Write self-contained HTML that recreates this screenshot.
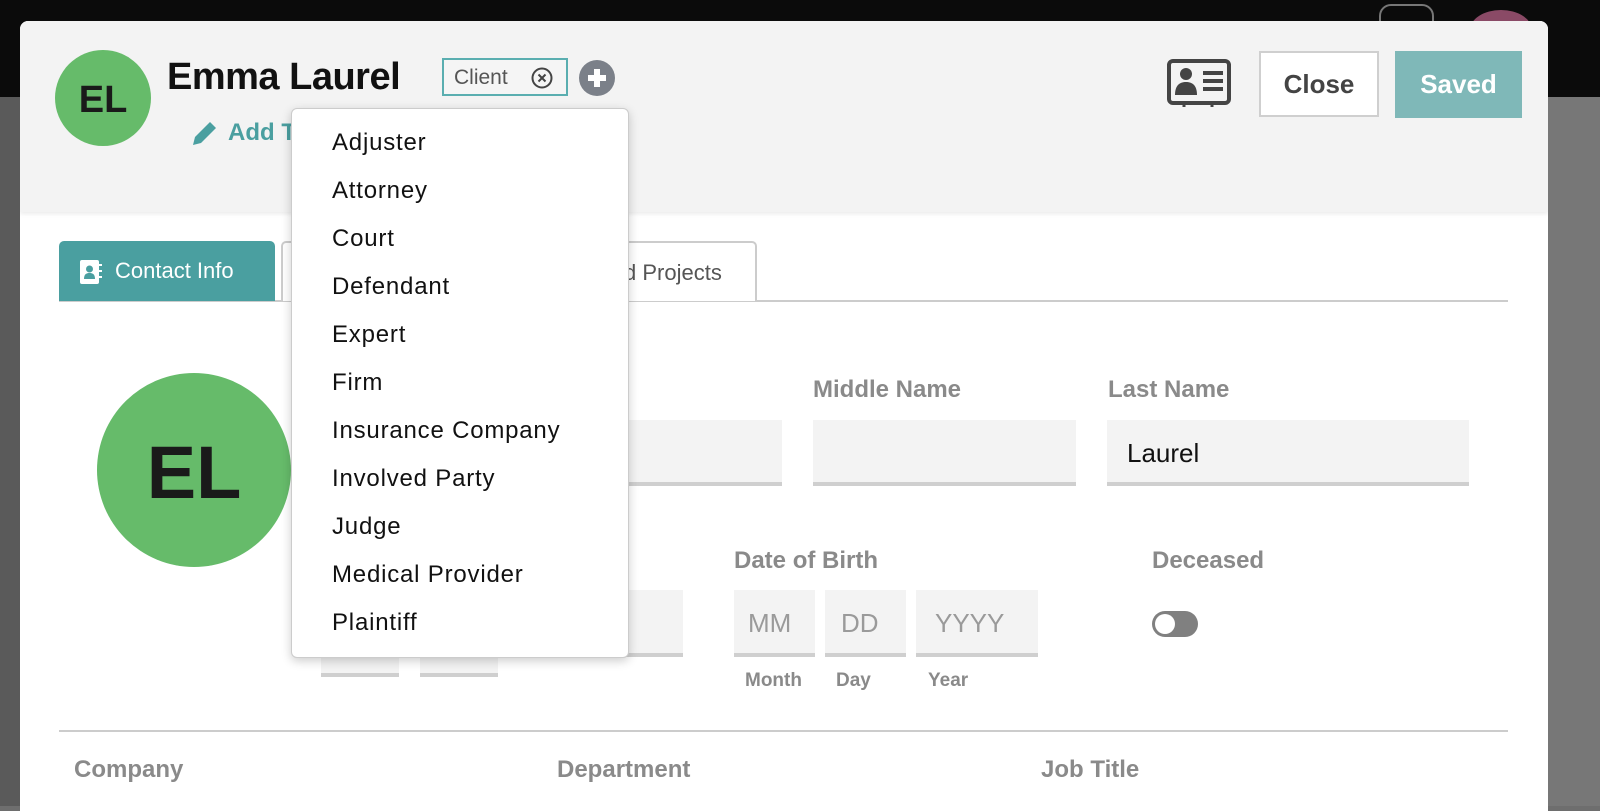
<!DOCTYPE html>
<html><head><meta charset="utf-8"><style>
*{box-sizing:border-box;margin:0;padding:0}
body{width:1600px;height:806px;overflow:hidden;position:relative;background:#6e6e6e;font-family:"Liberation Sans",Arial,sans-serif}
.a{position:absolute}
.lbl{position:absolute;font-weight:bold;font-size:24px;color:#8a8a8a}
.inp{position:absolute;background:#f3f3f3;border-bottom:4px solid #cfcfcf}
.sub{position:absolute;font-weight:bold;font-size:19px;color:#8a8a8a}
.ph{position:absolute;font-size:26px;color:#9a9a9a}
.dd div{position:absolute;left:40px;font-size:24px;color:#111;letter-spacing:0.8px}
</style></head><body>
<div class="a" style="left:0;top:0;width:1600px;height:97px;background:#0b0b0b"></div>
<div class="a" style="left:0;top:97px;width:20px;height:709px;background:#5a5a5a"></div>
<div class="a" style="left:1548px;top:97px;width:52px;height:709px;background:#777"></div>
<div class="a" style="left:1379px;top:4px;width:55px;height:30px;border:2px solid #777;border-radius:12px"></div>
<div class="a" style="left:1470px;top:10px;width:62px;height:40px;border-radius:50%;background:#8a4a66"></div>

<div class="a" style="left:20px;top:21px;width:1528px;height:790px;background:#fff;border-radius:8px 8px 0 0;overflow:hidden">
 <div class="a" style="left:0;top:0;width:1528px;height:191px;background:#f3f3f3;box-shadow:0 2px 4px rgba(0,0,0,0.08)"></div>
</div>

<div class="a" style="left:55px;top:50px;width:96px;height:96px;border-radius:50%;background:#66bb6a;color:#1a1a1a;font-weight:bold;font-size:38px;text-align:center;line-height:100px">EL</div>
<div class="a" style="left:167px;top:56px;font-size:38px;font-weight:bold;color:#111;letter-spacing:-0.5px">Emma Laurel</div>
<div class="a" style="left:442px;top:58px;width:126px;height:38px;border:2px solid #5aaeb0;background:#f5f5f5;font-size:21px;color:#555;padding:6px 0 0 10px">Client
 <svg class="a" style="left:87px;top:7px" width="22" height="22" viewBox="0 0 22 22"><circle cx="11" cy="11" r="9.5" fill="none" stroke="#444" stroke-width="2"/><path d="M7.5 7.5l7 7M14.5 7.5l-7 7" stroke="#444" stroke-width="2"/></svg></div>
<svg class="a" style="left:579px;top:60px" width="36" height="36" viewBox="0 0 36 36"><circle cx="18" cy="18" r="18" fill="#7b8089"/><path d="M18 9v18M9 18h18" stroke="#fff" stroke-width="6"/></svg>
<svg class="a" style="left:190px;top:118px" width="30" height="30" viewBox="0 0 30 30"><path d="M3 27l2-8 15-15 6 6-15 15z" fill="#4a9fa0"/></svg>
<div class="a" style="left:228px;top:119px;font-size:24px;font-weight:bold;color:#4a9fa0">Add T</div>

<svg class="a" style="left:1167px;top:59px" width="64" height="48" viewBox="0 0 64 48"><rect x="2" y="2" width="60" height="42" rx="4" fill="none" stroke="#444" stroke-width="4"/><circle cx="19" cy="15" r="6" fill="#444"/><path d="M8 36c0-10 5-13 11-13s11 3 11 13z" fill="#444"/><path d="M36 14h20M36 22h20M36 30h20" stroke="#444" stroke-width="4"/><path d="M17 44v5M45 44v5" stroke="#444" stroke-width="3"/></svg>
<div class="a" style="left:1259px;top:51px;width:120px;height:66px;background:#fff;border:2px solid #cfcfcf;font-size:26px;font-weight:bold;color:#444;text-align:center;line-height:62px">Close</div>
<div class="a" style="left:1395px;top:51px;width:127px;height:67px;background:#7fb8b8;font-size:26px;font-weight:bold;color:#fff;text-align:center;line-height:67px">Saved</div>

<div class="a" style="left:59px;top:300px;width:1449px;height:2px;background:#ccc"></div>
<div class="a" style="left:59px;top:241px;width:216px;height:60px;background:#4a9fa0;border-radius:5px 5px 0 0;color:#fff;font-size:22px;padding:17px 0 0 56px">Contact Info</div>
<svg class="a" style="left:80px;top:260px" width="22" height="24" viewBox="0 0 22 24"><rect x="0" y="0" width="19" height="24" rx="2" fill="#fff"/><circle cx="9.5" cy="9" r="3.5" fill="#4a9fa0"/><path d="M4 19c0-5 2.5-6 5.5-6s5.5 1 5.5 6z" fill="#4a9fa0"/><path d="M19 5h3M19 11h3M19 17h3" stroke="#fff" stroke-width="2"/></svg>
<div class="a" style="left:281px;top:241px;width:476px;height:60px;border:2px solid #ccc;border-bottom:none;border-radius:5px 5px 0 0;background:#fff;font-size:22px;color:#555;padding:17px 0 0 341px">d Projects</div>

<div class="a" style="left:97px;top:373px;width:194px;height:194px;border-radius:50%;background:#66bb6a;color:#1a1a1a;font-weight:bold;font-size:74px;text-align:center;line-height:200px">EL</div>

<div class="lbl" style="left:813px;top:376px">Middle Name</div>
<div class="lbl" style="left:1108px;top:376px">Last Name</div>
<div class="inp" style="left:600px;top:420px;width:182px;height:66px"></div>
<div class="inp" style="left:813px;top:420px;width:263px;height:66px"></div>
<div class="inp" style="left:1107px;top:420px;width:362px;height:66px"></div>
<div class="a" style="left:1127px;top:438px;font-size:26px;color:#111">Laurel</div>

<div class="lbl" style="left:600px;top:547px">e</div>
<div class="inp" style="left:600px;top:590px;width:83px;height:67px"></div>
<div class="inp" style="left:321px;top:620px;width:78px;height:57px"></div>
<div class="inp" style="left:420px;top:620px;width:78px;height:57px"></div>
<div class="lbl" style="left:734px;top:547px">Date of Birth</div>
<div class="inp" style="left:734px;top:590px;width:81px;height:67px"></div>
<div class="inp" style="left:825px;top:590px;width:81px;height:67px"></div>
<div class="inp" style="left:916px;top:590px;width:122px;height:67px"></div>
<div class="ph" style="left:748px;top:608px">MM</div>
<div class="ph" style="left:841px;top:608px">DD</div>
<div class="ph" style="left:935px;top:608px">YYYY</div>
<div class="sub" style="left:745px;top:670px">Month</div>
<div class="sub" style="left:836px;top:670px">Day</div>
<div class="sub" style="left:928px;top:670px">Year</div>
<div class="lbl" style="left:1152px;top:547px">Deceased</div>
<div class="a" style="left:1152px;top:611px;width:46px;height:26px;border-radius:13px;background:#808080"></div>
<div class="a" style="left:1155px;top:614px;width:20px;height:20px;border-radius:50%;background:#fff"></div>

<div class="a" style="left:59px;top:730px;width:1449px;height:2px;background:#ccc"></div>
<div class="lbl" style="left:74px;top:756px">Company</div>
<div class="lbl" style="left:557px;top:756px">Department</div>
<div class="lbl" style="left:1041px;top:756px">Job Title</div>

<div class="a dd" style="left:291px;top:108px;width:338px;height:550px;background:#fff;border:1px solid #ccc;border-radius:6px;box-shadow:0 3px 10px rgba(0,0,0,0.2)">
 <div style="top:20px">Adjuster</div>
 <div style="top:68px">Attorney</div>
 <div style="top:116px">Court</div>
 <div style="top:164px">Defendant</div>
 <div style="top:212px">Expert</div>
 <div style="top:260px">Firm</div>
 <div style="top:308px">Insurance Company</div>
 <div style="top:356px">Involved Party</div>
 <div style="top:404px">Judge</div>
 <div style="top:452px">Medical Provider</div>
 <div style="top:500px">Plaintiff</div>
</div>
</body></html>
